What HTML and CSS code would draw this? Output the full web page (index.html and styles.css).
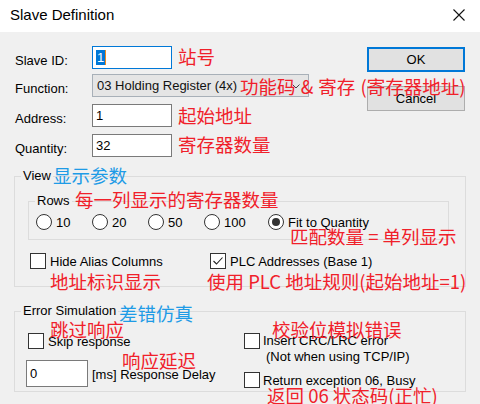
FILE: index.html
```html
<!DOCTYPE html>
<html>
<head>
<meta charset="utf-8">
<link rel="stylesheet" href="styles.css">
</head>
<body>
<div class="dialog">
  <div class="titlebar">
    <span class="title">Slave Definition</span>
    <svg class="close" width="12" height="12" viewBox="0 0 12 12"><path d="M0.5 0.5 L11.5 11.5 M11.5 0.5 L0.5 11.5" stroke="#111" stroke-width="1.1" fill="none"/></svg>
  </div>
  <div class="content">
    <div class="top">
      <div class="form">
        <div class="row"><span class="lbl">Slave ID:</span><div class="input focus"><span class="sel">1</span><span class="caret"></span></div></div>
        <div class="row r2"><span class="lbl">Function:</span><div class="combo"><span>03 Holding Register (4x)</span><svg class="arrow" width="8" height="5" viewBox="0 0 8 5"><path d="M0.5 0.5 L4 4 L7.5 0.5" stroke="#444" stroke-width="1" fill="none"/></svg></div></div>
        <div class="row"><span class="lbl">Address:</span><div class="input">1</div></div>
        <div class="row"><span class="lbl">Quantity:</span><div class="input">32</div></div>
      </div>
      <div class="buttons">
        <div class="btn ok">OK</div>
        <div class="btn cancel">Cancel</div>
      </div>
    </div>

    <fieldset class="group view">
      <legend>View</legend>
      <fieldset class="group rows">
        <legend>Rows</legend>
        <div class="radios">
          <div class="opt"><span class="radio"></span>10</div>
          <div class="opt"><span class="radio"></span>20</div>
          <div class="opt"><span class="radio"></span>50</div>
          <div class="opt w100"><span class="radio"></span>100</div>
          <div class="opt last"><span class="radio on"></span>Fit to Quantity</div>
        </div>
      </fieldset>
      <div class="checks">
        <div class="chk first"><span class="box"></span>Hide Alias Columns</div>
        <div class="chk"><span class="box checked"><svg width="14" height="14" viewBox="0 0 14 14"><path d="M2.5 7 L5.5 10 L11.5 3.5" stroke="#222" stroke-width="1.1" fill="none"/></svg></span>PLC Addresses (Base 1)</div>
      </div>
    </fieldset>

    <fieldset class="group err">
      <legend>Error Simulation</legend>
      <div class="errcols">
        <div class="errleft">
          <div class="chk"><span class="box"></span>Skip response</div>
          <div class="delay"><div class="input tall">0</div><span class="dtext">[ms] Response Delay</span></div>
        </div>
        <div class="errright">
          <div class="chk top2"><span class="box"></span><div class="two"><div>Insert CRC/LRC error</div><div class="ind">(Not when using TCP/IP)</div></div></div>
          <div class="chk ret"><span class="box"></span>Return exception 06, Busy</div>
        </div>
      </div>
    </fieldset>
  </div>

  <span class="note red a1">站号</span>
  <span class="note red a2">功能码 &amp; 寄存 (寄存器地址)</span>
  <span class="note red a3">起始地址</span>
  <span class="note red a4">寄存器数量</span>
  <span class="note blue a5">显示参数</span>
  <span class="note red a6">每一列显示的寄存器数量</span>
  <span class="note red a7">匹配数量 = 单列显示</span>
  <span class="note red a8">地址标识显示</span>
  <span class="note red a9">使用 PLC 地址规则(起始地址=1)</span>
  <span class="note blue a10">差错仿真</span>
  <span class="note red a11">跳过响应</span>
  <span class="note red a12">响应延迟</span>
  <span class="note red a13">校验位模拟错误</span>
  <span class="note red a14">返回 06 状态码(正忙)</span>
</div>
</body>
</html>
```

FILE: styles.css
```css
* { box-sizing: border-box; }
html, body { margin: 0; padding: 0; }
body {
  width: 480px;
  height: 404px;
  overflow: hidden;
  font-family: "Liberation Sans", Arial, sans-serif;
  font-size: 13px;
  color: #000;
  background: #f0f0f0;
}
.dialog {
  position: relative;
  width: 480px;
  height: 404px;
  background: #f0f0f0;
  overflow: hidden;
}
.titlebar {
  height: 32px;
  background: #fff;
  display: flex;
  align-items: center;
  justify-content: space-between;
  padding: 0 15px 4px 10px;
}
.title {
  font-size: 15px;
  color: #000;
}
.close { display: block; margin-top: 1px; }

.content { padding: 0 14px; }

.top {
  display: flex;
  justify-content: space-between;
  height: 137px;
}
.form {
  padding-top: 14px;
  display: flex;
  flex-direction: column;
}
.row {
  display: flex;
  align-items: center;
  height: 23px;
  margin-top: 7px;
}
.row:first-child { margin-top: 0; }
.row.r2 { margin-top: 5px; }
.lbl {
  width: 78px;
  padding-left: 1px;
  padding-top: 5px;
}
.input {
  width: 80px;
  height: 23px;
  background: #fff;
  border: 1px solid #7a7a7a;
  padding: 0 3px;
  display: flex;
  align-items: center;
}
.input.focus { border-color: #0078d7; }
.sel {
  background: #0078d7;
  color: #fff;
  padding: 0 1px;
  line-height: 15px;
}
.caret {
  width: 1px;
  height: 15px;
  background: #f08a1d;
}
.combo {
  width: 217px;
  height: 23px;
  background: #e5e5e5;
  border: 1px solid #a8b0b8;
  display: flex;
  align-items: center;
  justify-content: space-between;
  padding: 0 8px 0 4px;
  color: #111;
  white-space: nowrap;
}
.arrow { display: block; margin-top: 1px; }

.buttons {
  padding-top: 15px;
  margin-right: 1px;
  display: flex;
  flex-direction: column;
}
.btn {
  width: 98px;
  height: 25px;
  background: #e1e1e1;
  border: 1px solid #adadad;
  display: flex;
  align-items: center;
  justify-content: center;
}
.btn.ok { border: 2px solid #0078d7; }
.btn.cancel { margin-top: 14px; }

fieldset.group {
  margin: 0;
  padding: 0;
  border: 1px solid #dcdcdc;
  min-width: 0;
}
fieldset.group > legend {
  margin-left: 6px;
  padding: 0 2px;
  line-height: 14px;
  height: 14px;
}
fieldset.view { padding: 0 0 17px 0; }
fieldset.rows {
  margin: 11px 16px 0 13px;
  padding: 0 0 9px 0;
}
.radios {
  display: flex;
  margin-top: 6px;
  padding-left: 7px;
  height: 16px;
  align-items: center;
}
.opt {
  width: 56px;
  display: flex;
  align-items: center;
  flex: none;
}
.opt.w100 { width: 64px; }
.opt.last { width: auto; white-space: nowrap; }
.radio {
  width: 16px;
  height: 16px;
  border: 1px solid #333;
  border-radius: 50%;
  background: #fff;
  margin-right: 4px;
  display: flex;
  align-items: center;
  justify-content: center;
  flex: none;
}
.radio.on::after {
  content: "";
  width: 8px;
  height: 8px;
  border-radius: 50%;
  background: #333;
}
.checks {
  display: flex;
  margin-top: 13px;
  padding-left: 15px;
  height: 16px;
}
.chk {
  display: flex;
  align-items: center;
  white-space: nowrap;
}
.chk.first { width: 180px; }
.box {
  width: 16px;
  height: 16px;
  border: 1px solid #333;
  background: #fff;
  margin-right: 4px;
  flex: none;
  display: flex;
  align-items: center;
  justify-content: center;
}
.box svg { display: block; }

fieldset.err {
  margin-top: 17px;
  padding: 0 0 3px 0;
}
.errcols { display: flex; }
.errleft {
  width: 229px;
  padding-left: 13px;
  padding-top: 15px;
}
.errleft .chk { height: 16px; }
.delay {
  display: flex;
  align-items: center;
  margin-top: 11px;
  margin-left: -2px;
}
.input.tall {
  width: 62px;
  height: 27px;
}
.dtext { margin-left: 4px; padding-top: 1px; }
.errright { padding-top: 15px; }
.chk.top2 { align-items: flex-start; }
.chk.top2 .box { margin-right: 3px; }
.two { line-height: 16px; }
.ind { padding-left: 3px; }
.chk.ret { margin-top: 7px; height: 16px; }
.chk.ret .box { margin-right: 3px; }

.note {
  position: absolute;
  font-family: "Noto Sans CJK SC", "Noto Sans", sans-serif;
  font-size: 18.5px;
  line-height: 19px;
  white-space: nowrap;
}
.red { color: #f0202a; }
.blue { color: #1e9be6; }
.a1 { left: 178px; top: 47px; }
.a2 { left: 240px; top: 77px; word-spacing: 1px; }
.a3 { left: 178px; top: 106px; }
.a4 { left: 178px; top: 135px; }
.a5 { left: 53px; top: 166px; }
.a6 { left: 75px; top: 190px; }
.a7 { left: 290px; top: 227px; }
.a8 { left: 50px; top: 272px; }
.a9 { left: 207px; top: 272px; }
.a10 { left: 119px; top: 304px; }
.a11 { left: 50px; top: 320px; }
.a12 { left: 122px; top: 351px; }
.a13 { left: 272px; top: 320px; }
.a14 { left: 267px; top: 386px; }
```
